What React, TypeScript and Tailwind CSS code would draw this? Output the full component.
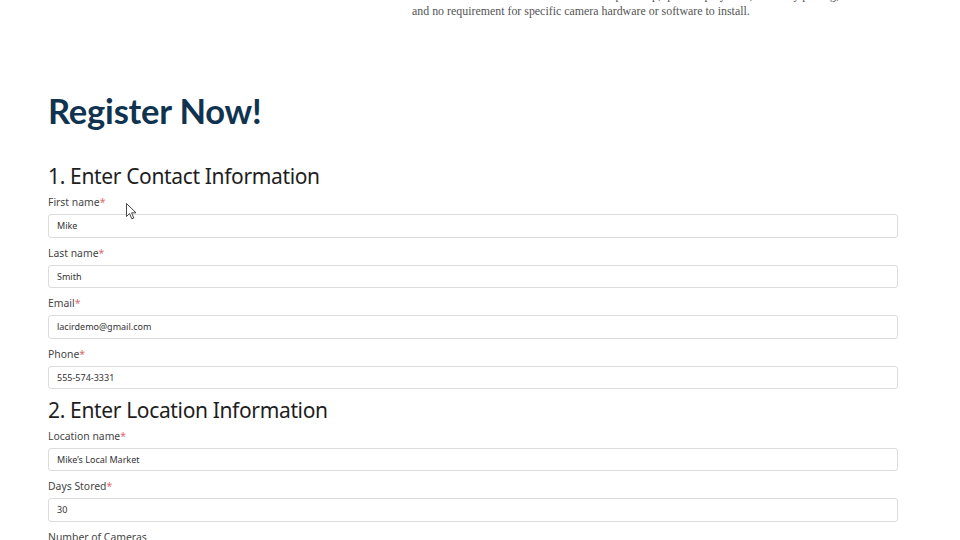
import React from "react";

const sans = { fontFamily: '"Noto Sans", "Open Sans", sans-serif' };

function Field({ label, value, required = true }: { label: string; value?: string; required?: boolean }) {
  return (
    <div className="flex flex-col mb-[7.17px]">
      <label className="text-[10.4px] leading-[16px] text-[#444]" style={sans}>
        {label}
        {required && <span className="text-[#dd6b6b]">*</span>}
      </label>
      {value !== undefined && (
        <div className="mt-[4px] h-[23.5px] w-full rounded-[3px] border border-[#dcdcdc] bg-white pl-[8px] flex items-center text-[9px] text-[#333]" style={sans}>
          {value}
        </div>
      )}
    </div>
  );
}

export default function App() {
  return (
    <div className="relative w-[960px] h-[540px] overflow-hidden bg-white">
      <div className="pl-[412px] pr-[40px]">
        <p
          className="-mt-[13px] text-[11.9px] leading-[16px] text-[#555]"
          style={{ fontFamily: '"Liberation Serif", "DejaVu Serif", serif' }}
        >
          LACIR is a cloud based service with a simple setup, quick deployment, and daily pricing,
          <br />
          and no requirement for specific camera hardware or software to install.
        </p>
      </div>
      <div className="pl-[48px] w-[898px]">
        <h1
          className="mt-[69.5px] text-[34.5px] leading-[43px] font-bold tracking-[-0.2px] text-[#10344f]"
          style={{ fontFamily: 'Lato, "Noto Sans", sans-serif' }}
        >
          Register Now!
        </h1>
        <h2 className="mt-[31px] mb-[5.5px] text-[21px] leading-[26px] tracking-[-0.35px] text-[#1e1e1e]" style={sans}>
          1. Enter Contact Information
        </h2>
        <Field label="First name" value="Mike" />
        <Field label="Last name" value="Smith" />
        <Field label="Email" value="lacirdemo@gmail.com" />
        <Field label="Phone" value="555-574-3331" />
        <h2 className="mt-[0px] mb-[5px] text-[21px] leading-[26px] tracking-[-0.35px] text-[#1e1e1e]" style={sans}>
          2. Enter Location Information
        </h2>
        <Field label="Location name" value="Mike’s Local Market" />
        <Field label="Days Stored" value="30" />
        <Field label="Number of Cameras" required={false} />
      </div>
      <svg className="absolute left-[126px] top-[203px]" width="11" height="17" viewBox="0 0 11 17">
        <path d="M0.5 0.5 L0.5 13.5 L3.5 10.5 L5.8 15.8 L7.8 15 L5.6 9.8 L10 9.8 Z" fill="white" stroke="#333" strokeWidth="0.9" strokeLinejoin="round" />
      </svg>
    </div>
  );
}
